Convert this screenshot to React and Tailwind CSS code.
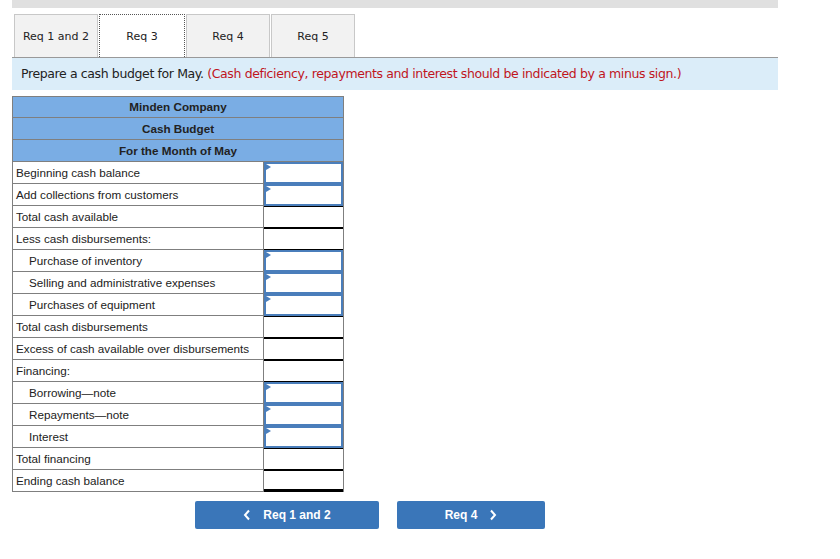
import React from 'react';

const rows = [
  { label: 'Beginning cash balance', input: true },
  { label: 'Add collections from customers', input: true },
  { label: 'Total cash available' },
  { label: 'Less cash disbursements:' },
  { label: 'Purchase of inventory', input: true, indent: true },
  { label: 'Selling and administrative expenses', input: true, indent: true },
  { label: 'Purchases of equipment', input: true, indent: true },
  { label: 'Total cash disbursements' },
  { label: 'Excess of cash available over disbursements' },
  { label: 'Financing:' },
  { label: 'Borrowing\u2014note', input: true, indent: true },
  { label: 'Repayments\u2014note', input: true, indent: true },
  { label: 'Interest', input: true, indent: true },
  { label: 'Total financing' },
  { label: 'Ending cash balance', last: true },
];

const tabs = [
  { name: 'Req 1 and 2', w: 'w-[84px]' },
  { name: 'Req 3', w: 'w-[86px]', active: true },
  { name: 'Req 4', w: 'w-[84px]' },
  { name: 'Req 5', w: 'w-[84px]' },
];

const Tab = ({ name, w, active }) => (
  <div
    className={
      active
        ? `${w} h-[43px] pt-[2px] flex items-center justify-center bg-white border border-dotted border-[#555] border-b-0 text-[11px] text-[#222]`
        : `${w} h-[43px] pt-[2px] flex items-center justify-center bg-[#f2f2f2] border border-[#c8c8c8] border-b-0 text-[11px] text-[#222]`
    }
  >
    {name}
  </div>
);

const ValueCell = ({ input, last }) => {
  if (input) {
    return (
      <div className="relative h-[22px] border-2 border-[#4a7ebb] bg-white">
        <span className="absolute left-0 top-0 w-0 h-0 border-t-[3px] border-b-[3px] border-l-[5px] border-t-transparent border-b-transparent border-l-[#4a7ebb]" />
      </div>
    );
  }
  return (
    <div
      className={
        last
          ? 'h-[22px] border-t border-t-black border-b-[3px] border-b-black bg-white'
          : 'h-[22px] border-t border-b border-black bg-white'
      }
    />
  );
};

export default function App() {
  return (
    <div className="w-[840px] h-[559px] bg-white pl-[12px] font-['DejaVu_Sans',Verdana,sans-serif]">
      <div className="w-[766px] h-[8px] bg-[#e0e0e0]" />

      {/* Tabs */}
      <div className="flex items-end mt-[6px] pl-[2px] gap-[1px]">
        {tabs.map((t) => (
          <Tab key={t.name} {...t} />
        ))}
      </div>

      {/* Instruction */}
      <div className="w-[766px] h-[33px] pt-[1px] bg-[#dbedf9] border-t border-[#999] flex items-center pl-[9px] text-[12.5px] tracking-[-0.38px]">
        <span className="text-[#222]">Prepare a cash budget for May.&nbsp;</span>
        <span className="text-[#c0151d]">
          (Cash deficiency, repayments and interest should be indicated by a minus sign.)
        </span>
      </div>

      {/* Budget table */}
      <div className="mt-[6px] w-[332px] font-['Liberation_Sans',Arial,sans-serif] text-[11.7px] text-[#222]">
        <div className="border border-[#7f7f7f] bg-[#7aade4]">
          <div className="h-[21px] flex items-center justify-center font-bold text-[#222] border-b border-[#7f7f7f]">
            Minden Company
          </div>
          <div className="h-[22px] flex items-center justify-center font-bold text-[#222] border-b border-[#7f7f7f]">
            Cash Budget
          </div>
          <div className="h-[21px] flex items-center justify-center font-bold text-[#222]">
            For the Month of May
          </div>
        </div>
        <div className="border-l border-r border-[#7f7f7f]">
          {rows.map((r) => (
            <div key={r.label} className="flex h-[22px]">
              <div
                className={
                  r.indent
                    ? 'w-[251px] h-[22px] flex items-center pl-[16px] border-r border-b border-[#7f7f7f]'
                    : 'w-[251px] h-[22px] flex items-center pl-[3px] border-r border-b border-[#7f7f7f]'
                }
              >
                {r.label}
              </div>
              <div className="flex-1">
                <ValueCell input={r.input} last={r.last} />
              </div>
            </div>
          ))}
        </div>
      </div>

      {/* Navigation buttons */}
      <div className="flex mt-[9px] pl-[183px] gap-[18px] font-['Liberation_Sans',Arial,sans-serif]">
        <button className="w-[184px] h-[28px] bg-[#3a76b9] rounded-[2px] text-white text-[12px] font-bold flex items-center justify-center">
          <svg width="8" height="12" viewBox="0 0 8 12" className="mr-[12px]">
            <path d="M6 1.5 L2 6 L6 10.5" stroke="white" strokeWidth="2" fill="none" />
          </svg>
          Req 1 and 2
        </button>
        <button className="w-[148px] h-[28px] bg-[#3a76b9] rounded-[2px] text-white text-[12px] font-bold flex items-center justify-center">
          Req 4
          <svg width="8" height="12" viewBox="0 0 8 12" className="ml-[12px]">
            <path d="M2 1.5 L6 6 L2 10.5" stroke="white" strokeWidth="2" fill="none" />
          </svg>
        </button>
      </div>
    </div>
  );
}
